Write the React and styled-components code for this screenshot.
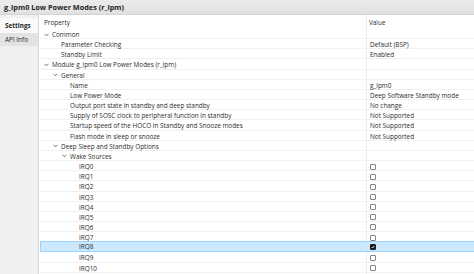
import React from "react";
import styled, { createGlobalStyle } from "styled-components";

const Global = createGlobalStyle`
  html, body { margin: 0; padding: 0; background: #ffffff; }
  body { font-family: "Open Sans", "Noto Sans", sans-serif; }
`;

const Frame = styled.div`
  width: 474px;
  height: 274px;
  overflow: hidden;
  display: flex;
  flex-direction: column;
  background: #ffffff;
  color: #2b2b2b;
  font-size: 6.4px;
`;

const TitleBar = styled.div`
  height: 15px;
  flex: none;
  box-sizing: border-box;
  display: flex;
  align-items: center;
  padding-left: 4px;
  background: linear-gradient(#ececec, #e0e0e0);
  border-bottom: 1px solid #d4d4d4;
  font-weight: 700;
  font-size: 7.3px;
  line-height: 9px;
  color: #1e1e1e;
`;

const Body = styled.div`
  flex: 1;
  display: flex;
  min-height: 0;
`;

const SideTabs = styled.div`
  width: 39px;
  flex: none;
  box-sizing: border-box;
  background: #f0f0f0;
  border-right: 1px solid #d9d9d9;
  display: flex;
  flex-direction: column;
  padding-top: 3px;
`;

const Tab = styled.div`
  height: ${(p) => (p.$active ? "15px" : "13px")};
  display: flex;
  align-items: center;
  padding-left: 5px;
  line-height: 9px;
  font-weight: ${(p) => (p.$active ? 700 : 400)};
  background: ${(p) => (p.$active ? "#fafafa" : "#e3e3e3")};
  color: #262626;
`;

const Table = styled.div`
  flex: 1;
  display: flex;
  flex-direction: column;
  position: relative;
  padding-left: 1px;
`;

const Divider = styled.div`
  position: absolute;
  top: 0;
  bottom: 0;
  left: 327px;
  width: 1px;
  background: #ececec;
`;

const HeaderRow = styled.div`
  height: 14px;
  flex: none;
  display: grid;
  grid-template-columns: 326px 1fr;
  align-items: center;
`;

const Row = styled.div`
  flex: none;
  box-sizing: border-box;
  display: grid;
  grid-template-columns: 326px 1fr;
  align-items: center;
  border-bottom: 1px solid ${(p) => (p.$selected ? "#99d1ff" : "#f0f0f0")};
  border-top: 1px solid ${(p) => (p.$selected ? "#99d1ff" : "transparent")};
  border-left: 1px solid ${(p) => (p.$selected ? "#99d1ff" : "transparent")};
  background: ${(p) => (p.$selected ? "#cce8ff" : "transparent")};
  margin-top: ${(p) => (p.$selected ? "-1px" : "0")};
  height: ${(p) => (p.$selected ? "11.17px" : "10.17px")};
  position: relative;
  z-index: ${(p) => (p.$selected ? 1 : 0)};
`;

const PropCell = styled.div`
  display: flex;
  align-items: center;
  padding-left: ${(p) => 3 + p.$level * 9}px;
  white-space: nowrap;
  line-height: 9px;
`;

const HeadCell = styled.div`
  padding-left: ${(p) => p.$pad}px;
  line-height: 9px;
`;

const ChevronSlot = styled.span`
  width: 8px;
  flex: none;
  display: inline-flex;
  align-items: center;
`;

const ValueCell = styled.div`
  padding-left: 3px;
  display: flex;
  align-items: center;
  white-space: nowrap;
  line-height: 9px;
`;

const Box = styled.span`
  width: 6px;
  height: 6px;
  box-sizing: border-box;
  border: 1px solid ${(p) => (p.$checked ? "#1a1a1a" : "#858585")};
  background: ${(p) => (p.$checked ? "#1f1f1f" : "#ffffff")};
  border-radius: 1px;
  display: inline-flex;
  align-items: center;
  justify-content: center;
`;

const Chevron = () => (
  <svg width="5" height="4" viewBox="0 0 5 4">
    <polyline points="0.6,0.9 2.5,2.8 4.4,0.9" fill="none" stroke="#4a4a4a" strokeWidth="0.8" />
  </svg>
);

const Check = () => (
  <svg width="4" height="4" viewBox="0 0 4 4">
    <polyline points="0.6,2 1.6,3 3.4,0.9" fill="none" stroke="#ffffff" strokeWidth="0.8" />
  </svg>
);

const rows = [
  { label: "Common", level: 0, group: true },
  { label: "Parameter Checking", level: 1, value: "Default (BSP)" },
  { label: "Standby Limit", level: 1, value: "Enabled" },
  { label: "Module g_lpm0 Low Power Modes (r_lpm)", level: 0, group: true },
  { label: "General", level: 1, group: true },
  { label: "Name", level: 2, value: "g_lpm0" },
  { label: "Low Power Mode", level: 2, value: "Deep Software Standby mode" },
  { label: "Output port state in standby and deep standby", level: 2, value: "No change" },
  { label: "Supply of SOSC clock to peripheral function in standby", level: 2, value: "Not Supported" },
  { label: "Startup speed of the HOCO in Standby and Snooze modes", level: 2, value: "Not Supported" },
  { label: "Flash mode in sleep or snooze", level: 2, value: "Not Supported" },
  { label: "Deep Sleep and Standby Options", level: 1, group: true },
  { label: "Wake Sources", level: 2, group: true },
  ...Array.from({ length: 11 }, (_, i) => ({
    label: `IRQ${i}`,
    level: 3,
    check: true,
    checked: i === 8,
    selected: i === 8,
  })),
];

export default function App() {
  return (
    <>
      <Global />
      <Frame>
        <TitleBar>g_lpm0 Low Power Modes (r_lpm)</TitleBar>
        <Body>
          <SideTabs>
            <Tab $active>Settings</Tab>
            <Tab>API Info</Tab>
          </SideTabs>
          <Table>
            <Divider />
            <HeaderRow>
              <HeadCell $pad={4}>Property</HeadCell>
              <HeadCell $pad={3}>Value</HeadCell>
            </HeaderRow>
            {rows.map((r) => (
              <Row key={r.label} $selected={r.selected}>
                <PropCell $level={r.level}>
                  <ChevronSlot>{r.group ? <Chevron /> : null}</ChevronSlot>
                  {r.label}
                </PropCell>
                <ValueCell>
                  {r.check ? (
                    <Box $checked={r.checked}>{r.checked ? <Check /> : null}</Box>
                  ) : (
                    r.value
                  )}
                </ValueCell>
              </Row>
            ))}
          </Table>
        </Body>
      </Frame>
    </>
  );
}
